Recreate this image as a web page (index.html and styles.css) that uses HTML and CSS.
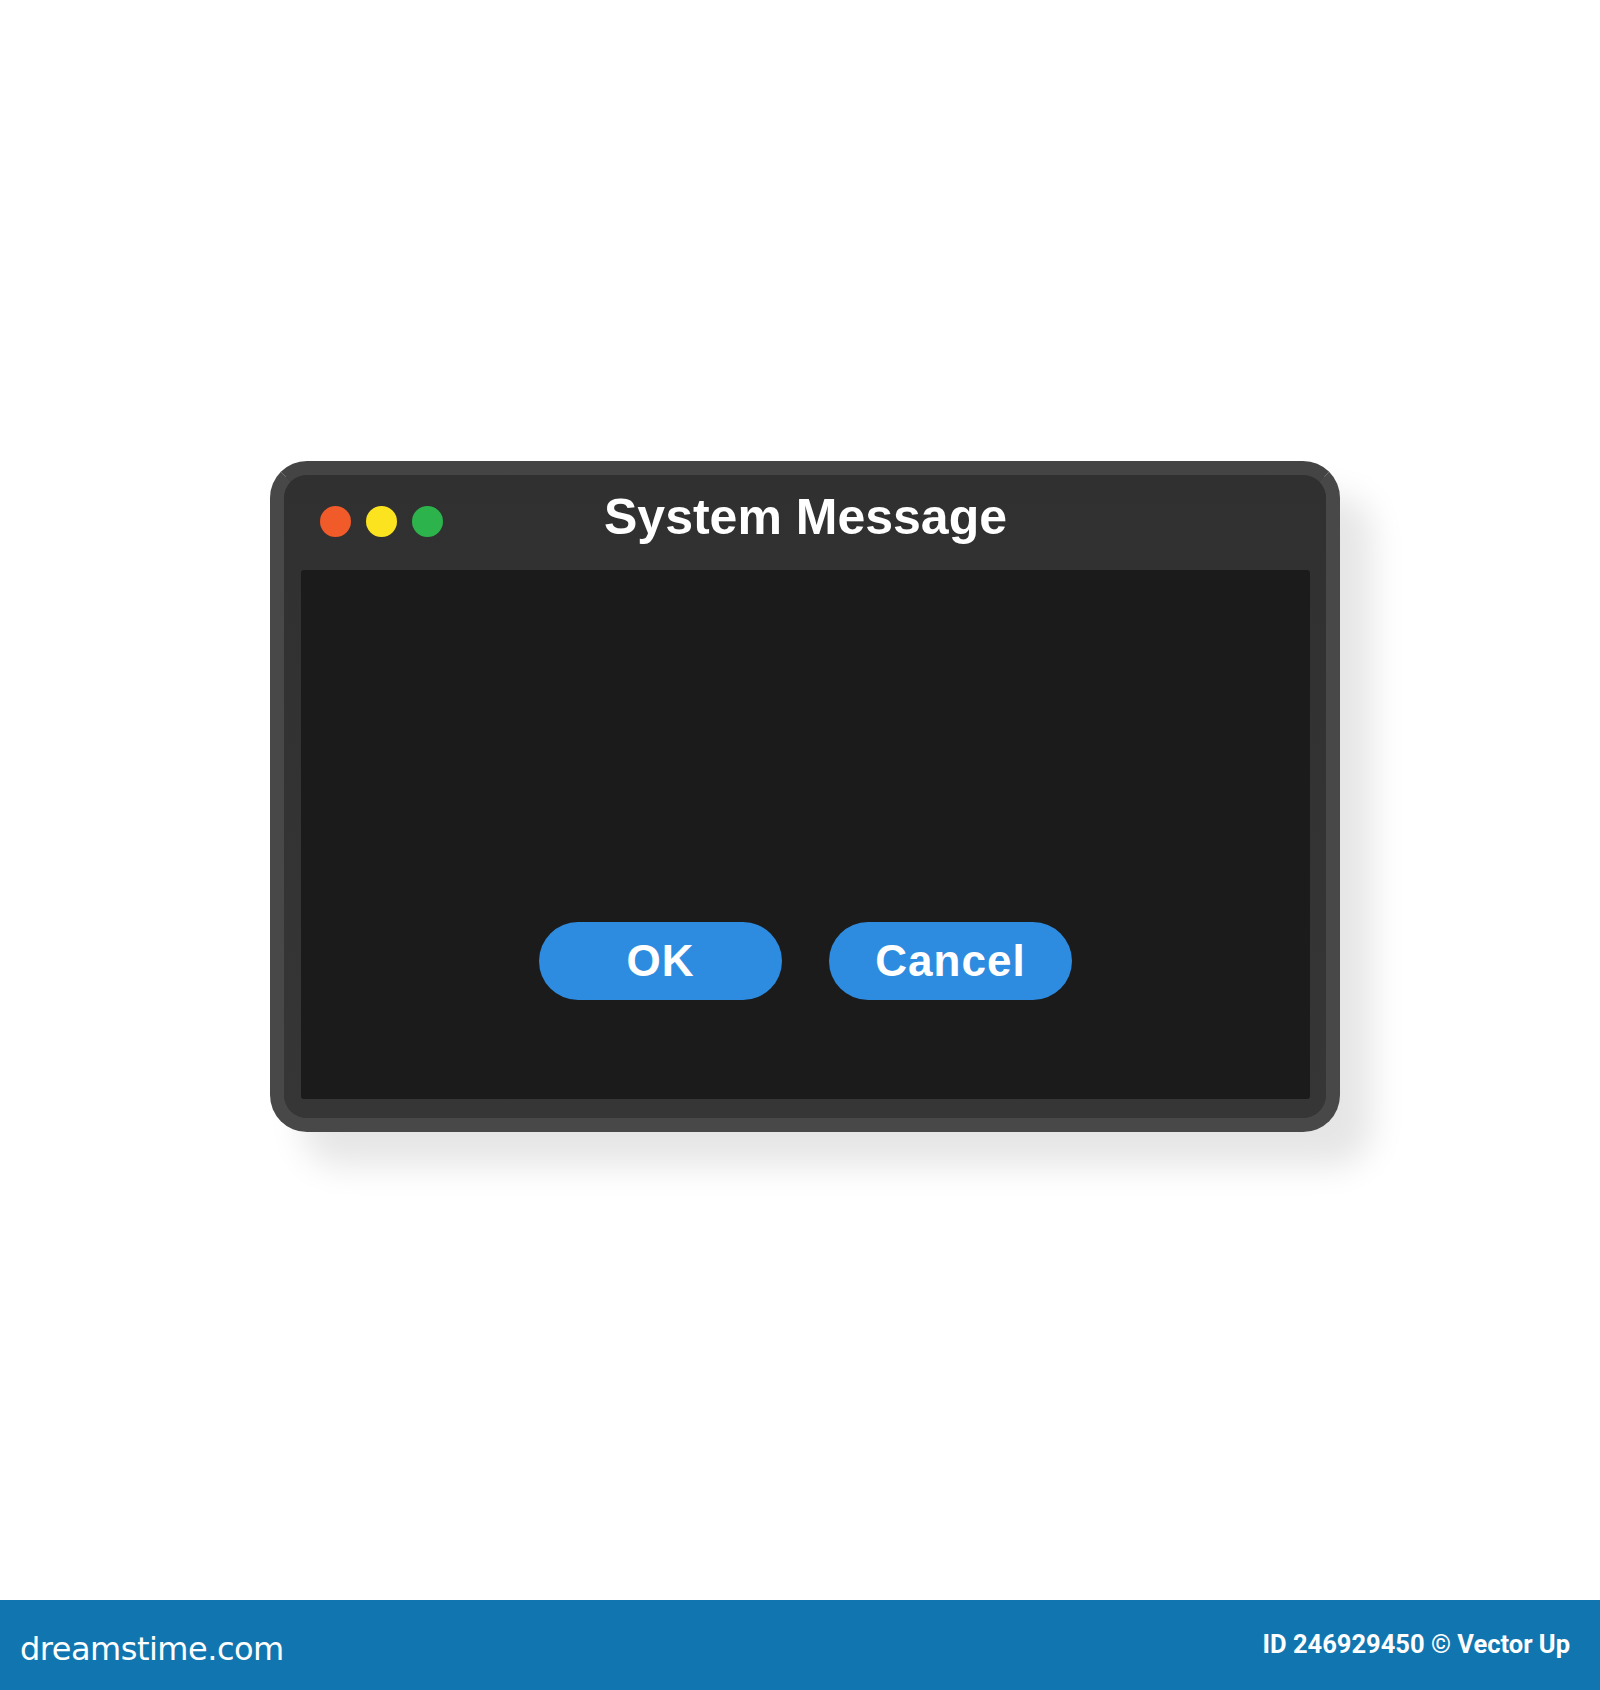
FILE: index.html
```html
<!DOCTYPE html>
<html lang="en">
<head>
<meta charset="utf-8">
<title>System Message</title>
<link rel="stylesheet" href="styles.css">
</head>
<body>
<div class="page">
  <main class="stage">
    <section class="window">
      <div class="panel">
        <header class="titlebar">
          <div class="lights">
            <span class="light light-close"></span>
            <span class="light light-min"></span>
            <span class="light light-max"></span>
          </div>
          <h1 class="title">System Message</h1>
          <div class="spacer"></div>
        </header>
        <div class="content">
          <button class="btn" type="button">OK</button>
          <button class="btn" type="button">Cancel</button>
        </div>
      </div>
    </section>
  </main>
  <footer class="bar">
    <span class="brand">dreamstime.com</span>
    <span class="credit">ID 246929450 © Vector Up</span>
  </footer>
</div>
</body>
</html>
```

FILE: styles.css
```css
* {
  box-sizing: border-box;
}

html, body {
  margin: 0;
  padding: 0;
  background: #ffffff;
}

.page {
  width: 1600px;
  height: 1690px;
  display: flex;
  flex-direction: column;
  font-family: "Liberation Sans", Arial, sans-serif;
}

.stage {
  height: 1600px;
  padding: 461px 0 0 270px;
}

/* dialog frame: light outer ring around a darker panel */
.window {
  width: 1070px;
  height: 671px;
  border: 14px solid #484848;
  border-top-color: #444444;
  border-radius: 37px;
  background: #323232;
  box-shadow: 32px 34px 34px rgba(0, 0, 0, 0.1);
  overflow: hidden;
}

.panel {
  height: 100%;
  display: flex;
  flex-direction: column;
  padding: 0 16px 19px 17px;
  background: linear-gradient(#303030, #363636);
  border-radius: 23px;
}

.titlebar {
  height: 95px;
  flex: none;
  display: grid;
  grid-template-columns: 1fr auto 1fr;
  align-items: center;
}

.lights {
  display: flex;
  gap: 15px;
  padding-left: 19px;
  margin-top: -3px;
}

.light {
  width: 31px;
  height: 31px;
  border-radius: 50%;
}

.light-close { background: #f15a29; }
.light-min   { background: #fbe41f; }
.light-max   { background: #2db34b; }

.title {
  margin: 0 0 12px;
  font-size: 50px;
  line-height: 50px;
  font-weight: 700;
  color: #ffffff;
  white-space: nowrap;
}

.content {
  flex: 1;
  background: #1b1b1b;
  border-radius: 3px;
  display: flex;
  justify-content: center;
  align-items: flex-end;
  gap: 47px;
  padding-bottom: 99px;
}

.btn {
  width: 243px;
  height: 78px;
  border: none;
  border-radius: 39px;
  background: #2e8ce0;
  color: #ffffff;
  font-family: "Liberation Sans", Arial, sans-serif;
  font-size: 44px;
  font-weight: 700;
  letter-spacing: 1px;
  line-height: 78px;
  padding: 0;
}

.bar {
  height: 90px;
  background: #1176b0;
  color: #ffffff;
  display: flex;
  justify-content: space-between;
  align-items: center;
  padding: 0 30px 0 20px;
}

.brand {
  font-family: "DejaVu Sans", sans-serif;
  font-size: 32px;
  font-weight: 400;
  letter-spacing: -0.5px;
  margin-top: 8px;
}

.credit {
  font-family: Roboto, "Liberation Sans", sans-serif;
  font-size: 25.5px;
  font-weight: 700;
  margin-top: -2px;
}
```
